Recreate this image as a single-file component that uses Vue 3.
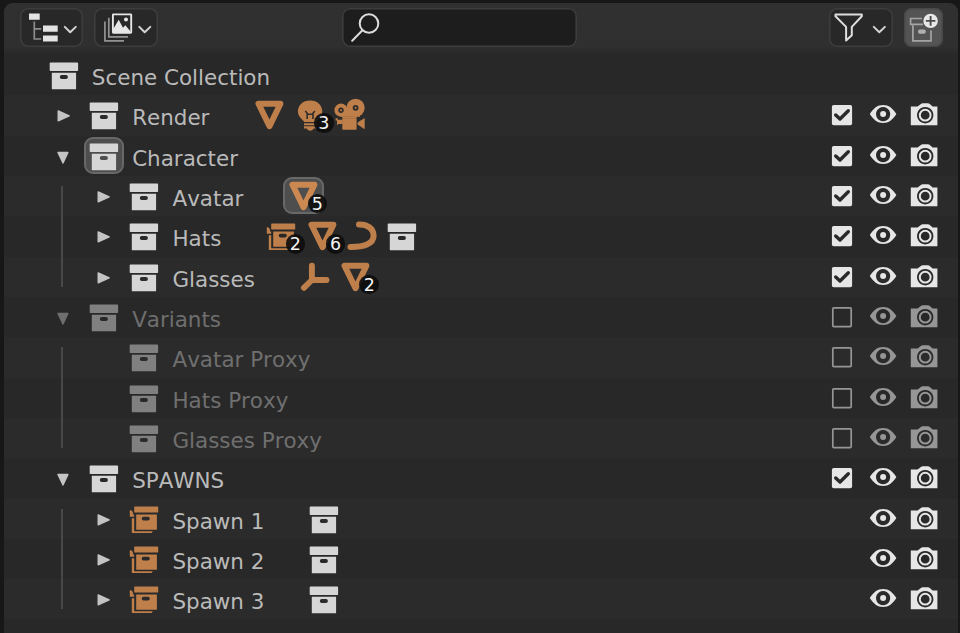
<script setup>
import { h } from 'vue'

const S = 'http://www.w3.org/2000/svg'
const shapes = {
  collection: `<rect x="5.7" y="7.6" width="28.4" height="8.5" rx="0.8" fill="currentColor"/><path fill="currentColor" fill-rule="evenodd" d="M7.8 17.8H32.1V33.7Q32.1 34.3 31.5 34.3H8.4Q7.8 34.3 7.8 33.7ZM17.8 20a2 2 0 0 0 0 4H21.9a2 2 0 0 0 0-4Z"/>`,
  instance: `<rect x="10.2" y="7.5" width="24" height="6" rx="0.6" fill="currentColor"/><path fill="currentColor" fill-rule="evenodd" d="M12.2 15.6H32.9V30.8H12.2ZM19.6 17.7a1.9 1.9 0 0 0 0 3.8H23.9a1.9 1.9 0 0 0 0-3.8Z"/><path fill="currentColor" d="M5.8 11.3H7.1L8.9 13V15.4H10.2V17.8H6.3Q5.8 17.8 5.8 17.2ZM7.8 19.3H10.2V32.3H28.8L27.6 34.1H7.8Z"/>`,
  mesh: `<path d="M9.5 8.7H31.4L20.5 31.2Z" fill="none" stroke="currentColor" stroke-width="6" stroke-linejoin="round"/>`,
  light: `<path fill="currentColor" d="M20.1 5.6C12.8 5.6 7.9 10.5 7.9 16.6C7.9 20.5 10.2 22.7 12.3 24.7L14.4 27H25.8L27.9 24.7C30 22.7 32.3 20.5 32.3 16.6C32.3 10.5 27.4 5.6 20.1 5.6Z"/><path d="M15.3 16 17.2 18.3V24M24.9 16 23 18.3V24M17.2 19.2H23" fill="none" stroke="#302d2a" stroke-width="1.6"/><path d="M14 29.2H26.5M14 32.4H26.5" stroke="currentColor" stroke-width="2.1"/><path d="M17 33H23.4V34Q22.4 35.8 20.2 35.8Q18 35.8 17 34Z" fill="currentColor"/>`,
  camera: `<path fill="currentColor" d="M11 15H30V21.7H11Z"/><circle cx="11" cy="15.1" r="6.6" fill="currentColor"/><circle cx="25.6" cy="12.8" r="9.1" fill="currentColor"/><circle cx="11" cy="15.3" r="2.7" fill="#302d2a"/><circle cx="25.6" cy="12.8" r="2.9" fill="#302d2a"/><circle cx="11" cy="15.3" r="1" fill="currentColor"/><circle cx="25.6" cy="12.8" r="1" fill="currentColor"/><rect x="12.3" y="23.2" width="14.3" height="11.6" rx="0.8" fill="currentColor"/><path d="M12.3 22.5H26.6" stroke="currentColor" stroke-width="2"/><path fill="currentColor" d="M5.6 23.3H7.7V24.8H12.6V29H7.7V30.3H7V25.4H5.6ZM34.7 23V34.2L27.6 29.6V27.4Z"/>`,
  curve: `<path d="M17 8.5C25.2 8.3 31.6 12.3 31.6 19.8C31.6 28 21.5 31.1 8.5 31" fill="none" stroke="currentColor" stroke-width="6" stroke-linecap="round"/>`,
  empty: `<path d="M16.9 8.6V23H31.5M16.9 23 8.9 30.8" fill="none" stroke="currentColor" stroke-width="5.9" stroke-linecap="round" stroke-linejoin="round"/>`,
  closed: `<path d="M14.2 16 25.2 20.8 14.2 25.8Z" fill="currentColor" stroke="currentColor" stroke-width="1.4" stroke-linejoin="round"/>`,
  open: `<path d="M14 16.4H23.9L19 27Z" fill="currentColor" stroke="currentColor" stroke-width="1.4" stroke-linejoin="round"/>`,
  checked: `<rect x="8.9" y="10.1" width="20.2" height="20.2" rx="1.8" fill="currentColor"/><path d="M12.7 20 17 24 25.3 15.8" fill="none" stroke="#292929" stroke-width="3.4" stroke-linecap="round" stroke-linejoin="round"/>`,
  unchecked: `<rect x="9.8" y="10.8" width="18.4" height="18.8" rx="1" fill="none" stroke="currentColor" stroke-width="1.7"/>`,
  eye: `<path fill="currentColor" fill-rule="evenodd" d="M6.8 19.1C10.4 13.4 14.5 10.1 20.1 10.1S29.8 13.4 33.4 19.1C29.8 24.8 25.7 28.1 20.1 28.1S10.4 24.8 6.8 19.1ZM20.1 12a7.1 7.1 0 1 0 .01 0Z"/><circle cx="20.1" cy="19.1" r="3" fill="currentColor"/>`,
  render: `<path fill="currentColor" fill-rule="evenodd" d="M6.8 11.6H13.6L16.9 9Q17.7 8.3 18.7 8.3H24Q25 8.3 25.8 9L28.6 11.6H33.4V30.2H6.8ZM21.2 12a8.2 8.2 0 1 0 .01 0Z"/><circle cx="21.2" cy="20.2" r="5.4" fill="none" stroke="currentColor" stroke-width="2"/>`,
}

const Glyph = (props) =>
  h('svg', { xmlns: S, class: 'glyph', viewBox: '0 0 40.33 40.33', width: '40.33', height: '40.33', innerHTML: shapes[props.name] })
Glyph.props = ['name']

const c = (icon, count) => ({ icon, count })
const rows = [
  { label: 'Scene Collection', depth: 0 },
  { label: 'Render', depth: 0, arrow: 'closed', check: 'checked', children: [c('mesh'), c('light', 3), c('camera')] },
  { label: 'Character', depth: 0, arrow: 'open', check: 'checked', active: true },
  { label: 'Avatar', depth: 1, guide: 'first', arrow: 'closed', check: 'checked', children: [{ icon: 'mesh', count: 5, active: true }] },
  { label: 'Hats', depth: 1, guide: 'mid', arrow: 'closed', check: 'checked', children: [c('instance', 2), c('mesh', 6), c('curve'), c('collection')] },
  { label: 'Glasses', depth: 1, guide: 'last', arrow: 'closed', check: 'checked', children: [c('empty'), c('mesh', 2)] },
  { label: 'Variants', depth: 0, arrow: 'open', check: 'unchecked', dim: true },
  { label: 'Avatar Proxy', depth: 1, guide: 'first', arrow: 'none', check: 'unchecked', dim: true },
  { label: 'Hats Proxy', depth: 1, guide: 'mid', arrow: 'none', check: 'unchecked', dim: true },
  { label: 'Glasses Proxy', depth: 1, guide: 'last', arrow: 'none', check: 'unchecked', dim: true },
  { label: 'SPAWNS', depth: 0, arrow: 'open', check: 'checked' },
  { label: 'Spawn 1', depth: 1, guide: 'first', arrow: 'closed', icon: 'instance', check: 'none', children: [c('collection')] },
  { label: 'Spawn 2', depth: 1, guide: 'mid', arrow: 'closed', icon: 'instance', check: 'none', children: [c('collection')] },
  { label: 'Spawn 3', depth: 1, guide: 'last', arrow: 'closed', icon: 'instance', check: 'none', children: [c('collection')] },
]
</script>

<template>
  <main class="editor">
    <header class="toolbar">
      <button class="tool" aria-label="Display mode">
        <svg viewBox="20 7.5 63 39" width="63" height="39">
          <path d="M34.3 21V38.5H41.2M34.3 28.4H41.2" fill="none" stroke="#8d8d8d" stroke-width="1.7" />
          <path d="M29 13H39.7V19.3H29ZM43 25H57.7V31.2H43ZM43 34.9H57.7V41.1H43Z" fill="#e4e4e4" />
          <path class="chevron" d="M64.8 26.4 70.2 31.8 75.8 26.4" />
        </svg>
      </button>
      <button class="tool images" aria-label="View layer">
        <svg viewBox="94 7.5 63 39" width="63" height="39">
          <path d="M108.8 17.3V36.3H128M104.9 21V40.3H124" fill="none" stroke="#929292" stroke-width="1.7" />
          <rect x="112.9" y="13.9" width="18.3" height="18.4" rx="0.5" fill="none" stroke="#e6e6e6" stroke-width="1.9" />
          <path d="M113 32V29L118.7 19.3 123 27.2 125.3 24.8 130 30.3V32Z" fill="#e6e6e6" />
          <circle cx="126" cy="19" r="2" fill="#e6e6e6" />
          <path class="chevron" d="M139.3 26.4 144.7 31.8 150.3 26.4" />
        </svg>
      </button>
      <div class="search">
        <svg viewBox="342 7.5 50 37" width="50" height="37">
          <circle cx="369" cy="23" r="9.3" />
          <path d="M362.2 30 352.2 40.2" />
        </svg>
      </div>
      <button class="tool filter" aria-label="Filter">
        <svg viewBox="829.5 7.5 63 39" width="63" height="39">
          <path d="M836 14H862.3V15.7L852.3 26.4V34.7L846.6 40V26.4L836 15.7Z" fill="none" stroke="#dedede" stroke-width="2" stroke-linejoin="round" />
          <path class="chevron" d="M874.3 26.4 879.8 31.8 885.4 26.4" />
        </svg>
      </button>
      <button class="tool add" aria-label="New collection">
        <svg viewBox="904 7.5 39 39" width="39" height="39">
          <path d="M922 18H910.6V23.8H923M912.9 25V40.4H931V30" fill="none" stroke="#a5a5a5" stroke-width="1.7" />
          <rect x="918" y="29" width="7.8" height="4.2" rx="2" fill="#b0b0b0" />
          <circle cx="930.6" cy="20.4" r="7.2" fill="#e8e8e8" />
          <path d="M925.8 20.4H935.4M930.6 15.6V25.2" stroke="#4b4b4b" stroke-width="1.9" />
        </svg>
      </button>
    </header>

    <section class="tree">
      <div v-for="row in rows" :key="row.label" class="row" :class="{ dim: row.dim }">
        <span v-if="row.guide" class="slot guide" :class="row.guide"></span>
        <span v-if="row.arrow" class="slot arrow"><Glyph v-if="row.arrow !== 'none'" :name="row.arrow" /></span>
        <span class="slot icon" :class="[row.icon, { active: row.active }]"><Glyph :name="row.icon || 'collection'" /></span>
        <span class="label">{{ row.label }}</span>
        <span v-if="row.children" class="children">
          <span v-for="(child, i) in row.children" :key="i" class="slot" :class="[child.icon === 'collection' ? 'icon' : 'object', { active: child.active }]">
            <Glyph :name="child.icon" />
            <span v-if="child.count" class="badge">{{ child.count }}</span>
          </span>
        </span>
        <span v-if="row.check" class="toggles">
          <span v-if="row.check !== 'none'" class="slot"><Glyph :name="row.check" /></span>
          <span class="slot"><Glyph name="eye" /></span>
          <span class="slot"><Glyph name="render" /></span>
        </span>
      </div>
    </section>
  </main>
</template>

<style>
body {
  background: #171717;
  overflow: hidden;
}
.glyph {
  display: block;
  position: relative;
}
</style>

<style scoped>
.editor {
  box-sizing: border-box;
  width: 954px;
  height: 630px;
  margin: 3px 0 0 4px;
  overflow: hidden;
  background: #282828;
  border-radius: 9px 9px 0 0;
  font-family: "DejaVu Sans", sans-serif;
}
.toolbar {
  box-sizing: border-box;
  display: flex;
  align-items: flex-start;
  height: 51.9px;
  padding: 4.5px 15.5px 0 15.5px;
  background: linear-gradient(#303030 0, #2f2f2f 44px, #282828 51px);
}
.tool {
  box-sizing: border-box;
  display: flex;
  width: 63.5px;
  height: 39px;
  padding: 0;
  border: none;
  border-radius: 8px;
  background: #282828;
  box-shadow: inset 0 0 0 1.6px #3d3d3d;
}
.tool svg {
  display: block;
  flex: none;
}
.images {
  margin-left: 11px;
}
.search {
  box-sizing: border-box;
  width: 235px;
  height: 39px;
  margin-left: 184px;
  border-radius: 8px;
  background: #1d1d1d;
  box-shadow: inset 0 0 0 1.6px #3d3d3d;
}
.search svg {
  display: block;
  fill: none;
  stroke: #dcdcdc;
  stroke-width: 2;
  stroke-linecap: round;
}
.filter {
  margin-left: auto;
}
.add {
  width: 39px;
  margin-left: 11px;
  background: #545454;
  box-shadow: inset 0 0 0 1.6px #484848;
}
.chevron {
  fill: none;
  stroke: #d4d4d4;
  stroke-width: 2;
  stroke-linecap: round;
  stroke-linejoin: round;
}
.row {
  display: flex;
  height: 40.33px;
  padding: 0 14px 0 39.5px;
  color: #bababa;
}
.row:nth-child(even) {
  background: #2b2b2b;
}
.slot {
  position: relative;
  flex: none;
  width: 40.33px;
  height: 40.33px;
}
.guide::before {
  content: "";
  display: block;
  width: 2px;
  height: 100%;
  margin-left: 17.5px;
  background: #484848;
}
.guide.first {
  box-sizing: border-box;
  padding-top: 10px;
}
.guide.last {
  box-sizing: border-box;
  padding-bottom: 10px;
}
.arrow {
  color: #c4c4c4;
}
.icon {
  color: #d6d6d6;
}
.object,
.instance {
  color: #bf7f4b;
}
.active::before {
  content: "";
  position: absolute;
  box-sizing: border-box;
  inset: 1.4px 0 2px;
  border: 2px solid #686868;
  border-radius: 9px;
  background: #4e4e4e;
}
.object.active {
  color: #cb8850;
}
.label {
  margin-left: 8px;
  font-size: 21.45px;
  font-kerning: none;
  line-height: 46px;
  white-space: pre;
}
.children {
  display: flex;
  margin-left: 40px;
}
.badge {
  position: absolute;
  left: 24.2px;
  top: 18px;
  width: 19.6px;
  height: 19.6px;
  border-radius: 50%;
  background: rgba(12, 12, 12, 0.9);
  color: #f4f4f4;
  font-size: 17.5px;
  line-height: 20px;
  text-align: center;
}
.toggles {
  display: flex;
  margin-left: auto;
  color: #e6e6e6;
}
.dim,
.dim .arrow {
  color: #6f6f6f;
}
.dim .icon {
  color: #808080;
}
.dim .toggles {
  color: #969696;
}
</style>
